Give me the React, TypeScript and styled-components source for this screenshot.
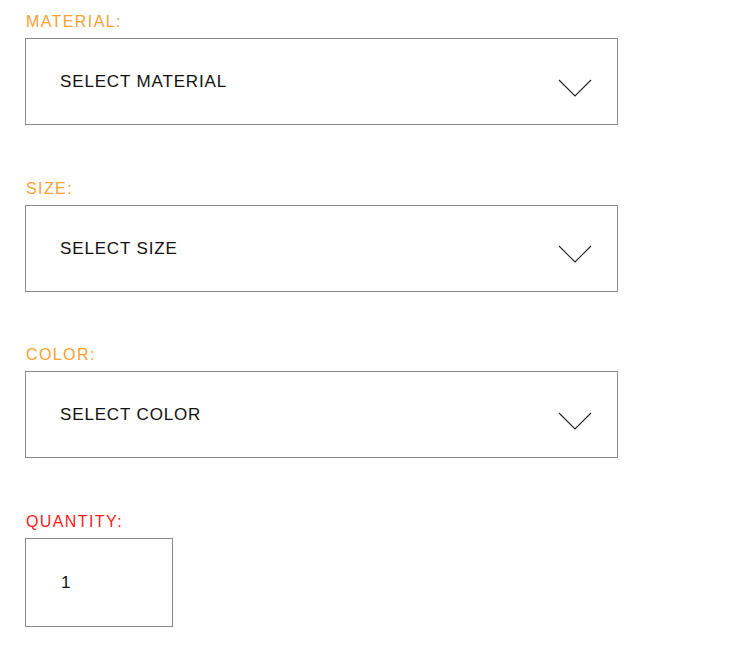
import React from "react";
import styled, { createGlobalStyle } from "styled-components";

const GlobalStyle = createGlobalStyle`
  body {
    margin: 0;
    background: #fff;
    font-family: "Liberation Sans", Arial, sans-serif;
  }
`;

const fields = [
  { label: "MATERIAL:", placeholder: "SELECT MATERIAL" },
  { label: "SIZE:", placeholder: "SELECT SIZE" },
  { label: "COLOR:", placeholder: "SELECT COLOR" },
];

const Chevron: React.FC = () => (
  <ChevronIcon width="34" height="18" viewBox="0 0 34 18" fill="none">
    <polyline points="1,1 17,17 33,1" stroke="#222" strokeWidth="1.1" />
  </ChevronIcon>
);

const App: React.FC = () => {
  return (
    <>
      <GlobalStyle />
      <Form>
        {fields.map((f) => (
          <Group key={f.label}>
            <Label>{f.label}</Label>
            <SelectBox>
              <Value>{f.placeholder}</Value>
              <Chevron />
            </SelectBox>
          </Group>
        ))}
        <Group>
          <Label $required>QUANTITY:</Label>
          <QuantityBox>
            <Value>1</Value>
          </QuantityBox>
        </Group>
      </Form>
    </>
  );
};

const Form = styled.div`
  display: flex;
  flex-direction: column;
  gap: 54.6px;
  padding: 13px 0 0 25px;
`;

const Group = styled.div`
  display: flex;
  flex-direction: column;
  gap: 7px;
`;

const Label = styled.div<{ $required?: boolean }>`
  font-size: 16px;
  line-height: 18px;
  letter-spacing: 1.4px;
  color: ${(p) => (p.$required ? "#ff1a1a" : "#f8a132")};
  padding-left: 1px;
`;

const SelectBox = styled.div`
  box-sizing: border-box;
  width: 593px;
  height: 87px;
  border: 1px solid #8a8a8a;
  display: flex;
  align-items: center;
  justify-content: space-between;
  padding: 0 25px 0 34px;
`;

const ChevronIcon = styled.svg`
  margin-top: 12px;
`;

const QuantityBox = styled.div`
  box-sizing: border-box;
  width: 148px;
  height: 89px;
  border: 1px solid #8a8a8a;
  display: flex;
  align-items: center;
  padding: 0 0 0 35px;
`;

const Value = styled.span`
  font-size: 17px;
  letter-spacing: 0.85px;
  color: #111;
  margin-top: 1px;
`;

export default App;
